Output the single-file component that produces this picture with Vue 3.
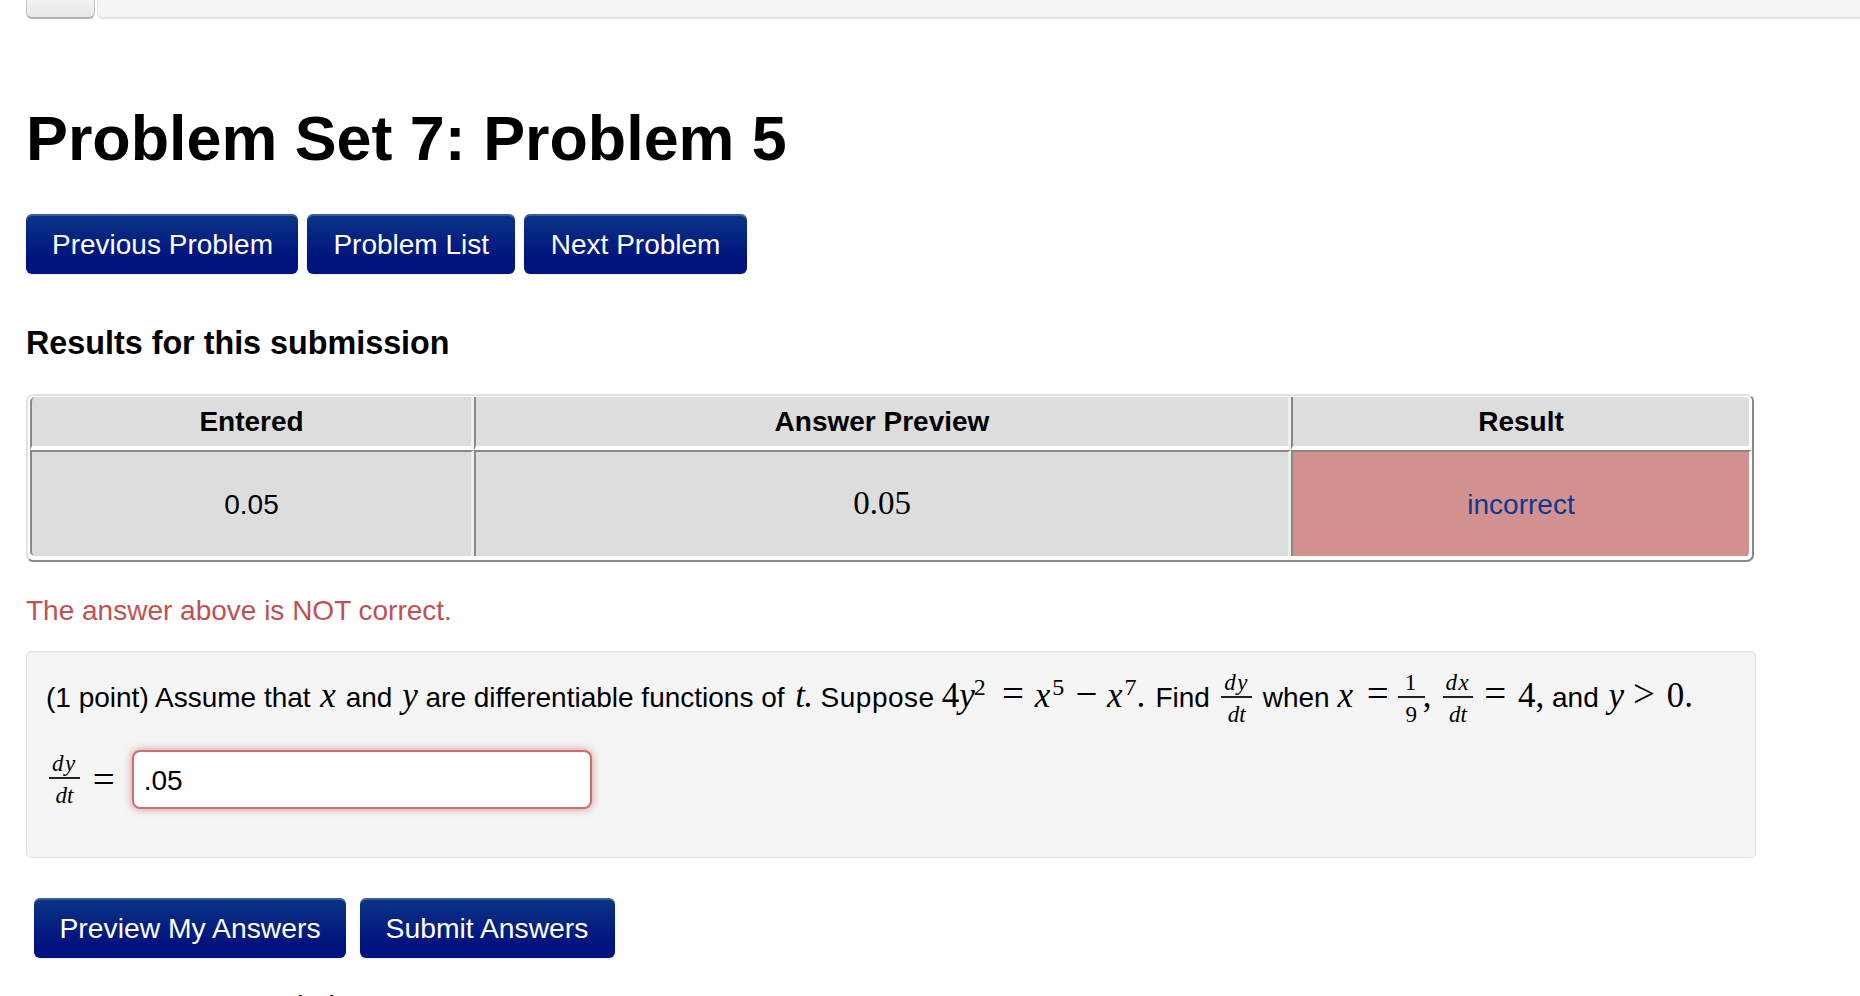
<template>
  <div class="page">
    <div class="topbar">
      <div class="top-btn"></div>
      <div class="top-well"></div>
    </div>

    <h1 class="title">Problem Set 7: Problem 5</h1>

    <div class="nav">
      <a v-for="b in navButtons" :key="b" class="btn">{{ b }}</a>
    </div>

    <h2 class="subtitle">Results for this submission</h2>

    <table class="results">
      <thead>
        <tr>
          <th class="col-a">Entered</th>
          <th class="col-b">Answer Preview</th>
          <th class="col-c">Result</th>
        </tr>
      </thead>
      <tbody>
        <tr>
          <td>0.05</td>
          <td class="serif">0.05</td>
          <td class="bad"><span>incorrect</span></td>
        </tr>
      </tbody>
    </table>

    <p class="error">The answer above is NOT correct.</p>

    <div class="well">
      <p class="statement">
        (1 point) Assume that <i class="m mv">x</i> and <i class="m mv tight">y</i> are differentiable functions of <i class="m mv tvar">t</i><span class="m dot">.</span> <span class="word">Suppose</span>
        <span class="m expr">4<i class="wide">y</i><sup class="sup2">2</sup> <span class="op eq-op">=</span> <i>x</i><sup>5</sup> <span class="op minus">−</span> <i>x</i><sup>7</sup>.</span> Find
        <span class="frac first"><i class="num">dy</i><i class="den">dt</i></span> when
        <span class="m"><i>x</i> <span class="op">=</span></span>
        <span class="frac upright"><span class="num">1</span><span class="den">9</span></span><span class="m comma">,</span>
        <span class="frac after-comma"><i class="num">dx</i><i class="den">dt</i></span>
        <span class="m"><span class="op">=</span> 4,</span> and
        <span class="m last"><i>y</i> <span class="op gt">&gt;</span> 0.</span>
      </p>
      <div class="answer">
        <span class="frac"><i class="num">dy</i><i class="den">dt</i></span>
        <span class="m eq">=</span>
        <input class="field" type="text" value=".05" />
      </div>
    </div>

    <div class="actions">
      <a class="btn">Preview My Answers</a>
      <a class="btn">Submit Answers</a>
    </div>

    <p class="cutoff">Your score was recorded.</p>
  </div>
</template>

<script setup>
const navButtons = ['Previous Problem', 'Problem List', 'Next Problem']
</script>

<style>
html, body {
  margin: 0;
  background: #fff;
  overflow: hidden;
}
</style>

<style scoped>
.page {
  height: 996px;
  overflow: hidden;
  box-sizing: border-box;
  padding: 0 26px;
  font-family: "Liberation Sans", Arial, sans-serif;
  font-size: 28px;
  color: #000;
}

.topbar {
  display: flex;
  gap: 2px;
  height: 19px;
  margin-right: -26px;
}
.top-btn {
  width: 69px;
  box-sizing: border-box;
  background: linear-gradient(#f3f3f3, #e6e6e6);
  border: 1px solid #c4c4c4;
  border-top: 0;
  border-bottom: 2px solid #b0b0b0;
  border-radius: 0 0 6px 6px;
}
.top-well {
  flex: 1;
  box-sizing: border-box;
  background: #f5f5f5;
  border-left: 1px solid #e6e6e6;
  border-bottom: 2px solid #e3e3e3;
  border-radius: 0 0 0 6px;
}

.title {
  margin: 84px 0 0;
  font-size: 62.8px;
  line-height: 70px;
  font-weight: 700;
}

.nav {
  display: flex;
  gap: 9px;
  margin-top: 41px;
}
.btn {
  display: block;
  box-sizing: border-box;
  height: 60px;
  padding: 0 26px;
  line-height: 62px;
  color: #fff;
  white-space: nowrap;
  border-radius: 6px;
  background: linear-gradient(#0b3584, #00137f 75%);
  box-shadow: inset 0 2px 0 rgba(255, 255, 255, 0.2), 0 1px 2px rgba(0, 0, 0, 0.08);
}
.nav .btn {
  padding: 0 26.4px;
}
.nav .btn:first-child {
  padding: 0 25px 0 26px;
}

.subtitle {
  margin: 50px 0 0;
  font-size: 32.3px;
  line-height: 38px;
  font-weight: 700;
}

.results {
  box-sizing: border-box;
  width: 1728px;
  height: 168px;
  margin-top: 32px;
  table-layout: fixed;
  border-collapse: separate;
  border-spacing: 0;
  border: 2px solid;
  border-color: #e2e2e2 #888 #888 #e2e2e2;
  border-radius: 7px;
  padding: 1px 0 4px 2px;
  background: #fff;
}
.col-a { width: 439px; }
.col-b { width: 812px; }
.results th,
.results td {
  padding: 0;
  text-align: center;
  background: #ddd;
  border-left: 2px solid #888;
  border-right: 3px solid #eee;
}
.results th {
  height: 48px;
  padding-top: 1px;
  font-weight: 700;
  border-bottom: 4px solid #fff;
}
.results td {
  height: 100px;
  padding-top: 2px;
  border-top: 2px solid #888;
}
.results th:first-child { border-top-left-radius: 5px; }
.results th:last-child { border-top-right-radius: 5px; border-right-color: #fff; }
.results td:first-child { border-bottom-left-radius: 5px; }
.results td:last-child { border-bottom-right-radius: 5px; border-right-color: #fff; }
.results td.serif {
  padding: 0 0 2px;
  font-family: "Liberation Serif", "Times New Roman", serif;
  font-size: 33px;
}
.results td.bad {
  background: #d39090;
  color: #0b3a8c;
}

.error {
  margin: 31px 0 0;
  line-height: 36px;
  color: #bf5153;
}

.well {
  box-sizing: border-box;
  width: 1730px;
  height: 207px;
  margin-top: 22px;
  padding: 19px 19px 0;
  background: #f5f5f5;
  border: 1px solid #e3e3e3;
  border-radius: 5px;
  box-shadow: inset 0 1px 1px rgba(0, 0, 0, 0.05);
}
.statement {
  margin: 0;
  height: 68px;
  line-height: 40px;
  white-space: nowrap;
}
.m {
  font-family: "Liberation Serif", "Times New Roman", serif;
  font-size: 35px;
}
.mv {
  margin: 0 2px;
}
.tight {
  margin-right: 0;
}
.tvar {
  margin: 0 0 0 3px;
}
.dot {
  margin: 0 0.5px 0 -1.5px;
}
.word {
  letter-spacing: 0.5px;
}
.expr {
  margin: 0 2.4px 0 7px;
}
.wide {
  margin-right: 2px;
}
.op {
  margin: 0 3px 0 5px;
  font-size: 39px;
  line-height: 0;
}
.eq-op {
  margin: 0 2px 0 7.5px;
}
.minus {
  margin: 0 0.6px 0 2.6px;
}
.gt {
  margin-left: 0.2px;
}
.comma {
  margin-left: -8px;
}
.last {
  margin-left: 2px;
}
.m sup {
  margin-left: 2px;
  font-size: 24px;
  line-height: 0;
  vertical-align: 12px;
}
.m .sup2 {
  margin-left: -3px;
}

.frac {
  display: inline-flex;
  flex-direction: column;
  align-items: center;
  vertical-align: middle;
  margin: -2px 6px 0;
  font-family: "Liberation Serif", "Times New Roman", serif;
  font-size: 23px;
  line-height: 27px;
}
.frac.first {
  margin-left: 3.6px;
  margin-right: 3px;
}
.frac.after-comma {
  margin-left: 11px;
}
.frac .num {
  padding: 0 3px;
  letter-spacing: 1.5px;
  border-bottom: 2px solid #222;
}
.frac .den {
  margin-top: 3px;
  letter-spacing: 0;
}
.upright .num {
  padding: 0 7px;
}

.answer {
  display: flex;
  align-items: center;
  margin-top: 11px;
}
.answer .frac {
  margin: 0 0 0 3px;
}
.eq {
  margin: 0 17px 0 13px;
  font-size: 39px;
}
.field {
  box-sizing: border-box;
  width: 460px;
  height: 59px;
  padding: 2px 10px 0;
  font: inherit;
  color: #000;
  background: #fff;
  border: 2px solid #c97070;
  border-radius: 8px;
  outline: none;
  box-shadow: 0 0 8px rgba(185, 74, 72, 0.6), inset 0 1px 1px rgba(0, 0, 0, 0.04);
}

.actions {
  display: flex;
  gap: 14px;
  margin: 40px 0 0 8px;
  font-size: 28.3px;
}
.actions .btn {
  padding: 0 25.5px;
  line-height: 60px;
}
.actions .btn:last-child {
  padding-right: 27px;
}

.cutoff {
  margin: 32px 0 0;
}
</style>
